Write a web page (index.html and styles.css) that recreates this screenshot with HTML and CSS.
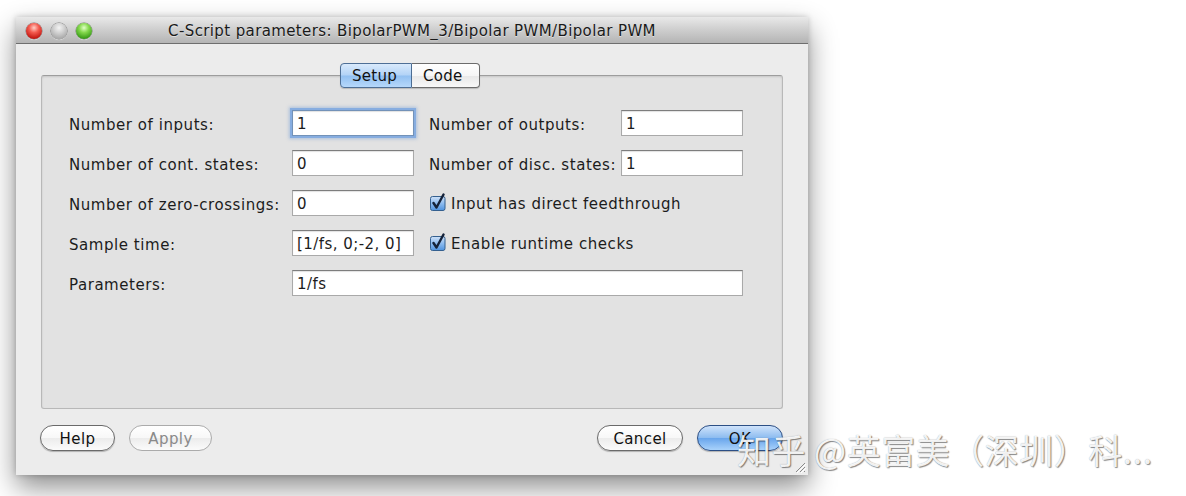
FILE: index.html
```html
<!DOCTYPE html>
<html>
<head>
<meta charset="utf-8">
<link rel="stylesheet" href="styles.css">
</head>
<body>
<div class="page">
  <div class="window">
    <div class="titlebar">
      <div class="lights">
        <span class="light red"></span>
        <span class="light gray"></span>
        <span class="light green"></span>
      </div>
      <div class="title">C-Script parameters: BipolarPWM_3/Bipolar PWM/Bipolar PWM</div>
    </div>
    <div class="content">
      <div class="group">
        <div class="tabs">
          <span class="tab active">Setup</span><span class="tab">Code</span>
        </div>
        <div class="form">
          <label class="lbl">Number of inputs:</label>
          <div class="field focus">1</div>
          <label class="lbl lbl2">Number of outputs:</label>
          <div class="field">1</div>

          <label class="lbl">Number of cont. states:</label>
          <div class="field">0</div>
          <label class="lbl lbl2">Number of disc. states:</label>
          <div class="field">1</div>

          <label class="lbl">Number of zero-crossings:</label>
          <div class="field">0</div>
          <div class="check">
            <svg class="cb" width="18" height="18" viewBox="0 0 18 18">
              <defs>
                <linearGradient id="cbg" x1="0" y1="0" x2="0" y2="1">
                  <stop offset="0" stop-color="#cfe2f8"/>
                  <stop offset="0.5" stop-color="#8dbbef"/>
                  <stop offset="1" stop-color="#4f93df"/>
                </linearGradient>
              </defs>
              <rect x="1.5" y="3.5" width="14.5" height="14" rx="2" fill="url(#cbg)" stroke="#35608f"/>
              <path d="M4.5 10 L7.5 14.5 L14.5 1.5" fill="none" stroke="#15233a" stroke-width="2.4" stroke-linejoin="round" stroke-linecap="round"/>
            </svg>
            <span>Input has direct feedthrough</span>
          </div>

          <label class="lbl">Sample time:</label>
          <div class="field">[1/fs, 0;-2, 0]</div>
          <div class="check">
            <svg class="cb" width="18" height="18" viewBox="0 0 18 18">
              <rect x="1.5" y="3.5" width="14.5" height="14" rx="2" fill="url(#cbg)" stroke="#35608f"/>
              <path d="M4.5 10 L7.5 14.5 L14.5 1.5" fill="none" stroke="#15233a" stroke-width="2.4" stroke-linejoin="round" stroke-linecap="round"/>
            </svg>
            <span>Enable runtime checks</span>
          </div>

          <label class="lbl">Parameters:</label>
          <div class="field wide">1/fs</div>
        </div>
      </div>
      <div class="buttons">
        <div class="btngroup">
          <button class="btn help">Help</button>
          <button class="btn apply" disabled>Apply</button>
        </div>
        <div class="btngroup">
          <button class="btn cancel">Cancel</button>
          <button class="btn ok">OK</button>
        </div>
      </div>
      <svg class="grip" width="12" height="12" viewBox="0 0 12 12">
        <path d="M11 2 L2 11 M11 6 L6 11 M11 10 L10 11" stroke="#8a8a8a" stroke-width="1"/>
        <path d="M12 3 L3 12 M12 7 L7 12" stroke="#ffffff" stroke-width="1"/>
      </svg>
    </div>
  </div>
  <div class="watermark">知乎 @英富美（深圳）科...</div>
</div>
</body>
</html>
```

FILE: styles.css
```css
html, body {
  margin: 0;
  padding: 0;
  background: #ffffff;
}

.page {
  position: relative;
  width: 1186px;
  height: 496px;
  overflow: hidden;
  font-family: "DejaVu Sans", "Liberation Sans", sans-serif;
  color: #1c1c1c;
}

.window {
  margin: 17px 0 0 16px;
  width: 792px;
  height: 458px;
  box-shadow: 0 12px 26px rgba(0,0,0,0.45), 0 0 6px rgba(0,0,0,0.2);
  background: #ececec;
  display: flex;
  flex-direction: column;
}

.titlebar {
  position: relative;
  height: 26px;
  border-bottom: 1px solid #6e6e6e;
  background: linear-gradient(to bottom, #e9e9e9 0%, #d0d0d0 45%, #b4b4b4 100%);
  display: flex;
  align-items: center;
  justify-content: center;
}

.lights {
  position: absolute;
  left: 10px;
  top: 6px;
  display: flex;
  gap: 9px;
}

.light {
  width: 16px;
  height: 16px;
  border-radius: 50%;
  box-shadow: 0 0 0 0.5px rgba(0,0,0,0.45), 0 1px 1px rgba(255,255,255,0.6);
}
.light.red {
  background: radial-gradient(circle at 50% 30%, #ffd0c8 0%, #f45b4f 35%, #c41a14 75%, #8e0c09 100%);
}
.light.gray {
  background: radial-gradient(circle at 50% 30%, #f4f4f4 0%, #cfcfcf 40%, #a8a8a8 80%, #8e8e8e 100%);
}
.light.green {
  background: radial-gradient(circle at 50% 30%, #e2ffc8 0%, #84d84c 35%, #3c9e1a 75%, #2a6e10 100%);
}

.title {
  font-size: 15px;
  letter-spacing: 0.38px;
  color: #1a1a1a;
  text-shadow: 0 1px 0 rgba(255,255,255,0.5);
  padding-top: 2px;
}

.content {
  position: relative;
  flex: 1;
  padding: 31px 25px 0 25px;
  background: #ececec;
}

.group {
  height: 334px;
  box-sizing: border-box;
  border: 1px solid #b8b8b8;
  border-top-color: #9d9d9d;
  border-radius: 3px;
  background: #e2e2e2;
  box-shadow: inset 0 1px 2px rgba(0,0,0,0.12);
}

.tabs {
  display: flex;
  justify-content: center;
  margin-top: -13px;
  margin-right: 4px;
}

.tab {
  height: 23px;
  line-height: 25px;
  font-size: 15px;
  letter-spacing: 0.3px;
  padding: 0 11px;
  border: 1px solid #6c6c6c;
  background: linear-gradient(to bottom, #ffffff 0%, #f6f6f6 50%, #e8e8e8 52%, #f8f8f8 100%);
  box-shadow: 0 1px 1px rgba(0,0,0,0.18);
  color: #111;
}
.tab:first-child {
  border-radius: 4px 0 0 4px;
  border-right: 1px solid #7a7a7a;
  width: 48px;
}
.tab:last-child {
  border-radius: 0 4px 4px 0;
  border-left: none;
  width: 45px;
}
.tab.active {
  background: linear-gradient(to bottom, #d9eafc 0%, #b3d3f6 48%, #92c0f1 52%, #b6d8fb 100%);
  border-color: #4e6f96;
}

.form {
  margin-top: 22px;
  padding-left: 27px;
  display: grid;
  grid-template-columns: 223px 122px 207px 122px;
  grid-auto-rows: 26px;
  row-gap: 14px;
  align-items: center;
  font-size: 15px;
  letter-spacing: 0.55px;
}

.lbl {
  white-space: nowrap;
  padding-top: 3px;
}
.lbl2 {
  padding-left: 15px;
}

.field {
  height: 26px;
  box-sizing: border-box;
  background: #ffffff;
  border: 1px solid #a9a9a9;
  border-top-color: #7d7d7d;
  box-shadow: inset 0 1px 1px rgba(0,0,0,0.12);
  padding: 1px 0 0 4px;
  line-height: 25px;
  white-space: nowrap;
  overflow: hidden;
  letter-spacing: 0.45px;
}
.field.focus {
  border-color: #7392b8;
  box-shadow: 0 0 0 2px #87ade0, 0 0 3px 3px rgba(120,160,215,0.5), inset 0 1px 1px rgba(0,0,0,0.12);
}
.field.wide {
  grid-column: 2 / span 3;
}

.check {
  grid-column: 3 / span 2;
  padding-left: 15px;
  padding-top: 2px;
  display: flex;
  align-items: center;
  gap: 4px;
  white-space: nowrap;
}
.cb {
  flex: none;
  margin-top: -4px;
}

.buttons {
  margin-top: 16px;
  display: flex;
  justify-content: space-between;
}
.btngroup {
  display: flex;
  gap: 14px;
}
.buttons .btngroup:first-child {
  margin-left: -1px;
}

.btn {
  height: 26px;
  box-sizing: border-box;
  border-radius: 13px;
  border: 1px solid #6a6a6a;
  background: linear-gradient(to bottom, #ffffff 0%, #f8f8f8 48%, #ececec 52%, #fbfbfb 100%);
  box-shadow: 0 1px 1px rgba(0,0,0,0.25);
  font-family: "DejaVu Sans", "Liberation Sans", sans-serif;
  font-size: 15px;
  letter-spacing: 0.4px;
  color: #111;
  padding: 1px 0 0 0;
  line-height: 24px;
}
.btn.help { width: 75px; }
.btn.apply {
  width: 83px;
  color: #8a8a8a;
  border-color: #ababab;
  box-shadow: none;
}
.btn.cancel { width: 86px; }
.btn.ok {
  width: 86px;
  border-color: #2c4f85;
  background: linear-gradient(to bottom, #cfe3fb 0%, #8fbdf0 48%, #6aa6ec 52%, #a9d2fb 100%);
}

.grip {
  position: absolute;
  right: 2px;
  bottom: 2px;
}

.watermark {
  position: absolute;
  left: 737px;
  top: 425px;
  font-family: "Noto Sans CJK SC", "Noto Sans", sans-serif;
  font-size: 34px;
  color: rgba(255,255,255,0.92);
  text-shadow: 1px 1px 1px rgba(0,0,0,0.45), 0 0 1px rgba(0,0,0,0.35);
  white-space: nowrap;
  letter-spacing: 0.5px;
}
```
